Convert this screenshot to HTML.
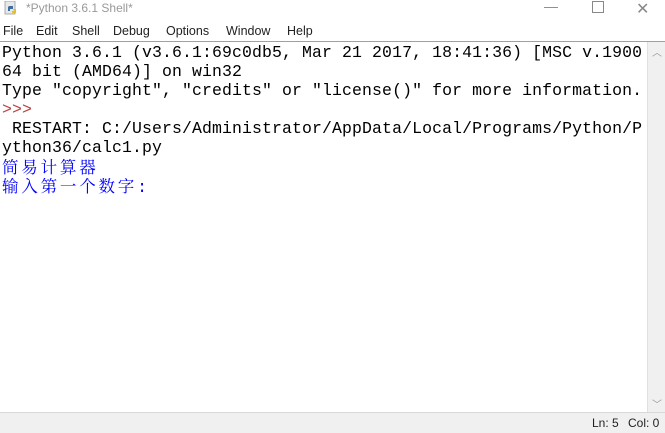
<!DOCTYPE html>
<html><head><meta charset="utf-8"><style>
html,body{margin:0;padding:0;width:665px;height:432px;overflow:hidden;background:#fff;font-family:"Liberation Sans",sans-serif}
.title{position:absolute;left:0;top:0;width:665px;height:22px;background:#fff}
.title .t{position:absolute;left:26px;top:1px;font-size:12px;color:#999}
.icon{position:absolute;left:4px;top:1px;width:14px;height:14px}
.ctl{position:absolute;top:0;color:#888;font-size:14px}
.menu{position:absolute;left:0;top:22px;width:665px;height:19px;font-size:12.5px;color:#222}
.menu span{position:absolute;top:2px}
.line{position:absolute;left:0;top:41px;width:665px;height:1px;background:#a0a0a0}
.text{position:absolute;left:0;top:42px;width:647px;height:370px;background:#fff;overflow:hidden}
.pre{position:absolute;left:2px;top:1px;font-family:"Liberation Mono",monospace;font-size:16.5px;color:#000;letter-spacing:0.1px}
.pre div{height:19px;line-height:19px;white-space:pre}
.p{color:#c04040}.b{color:#00f}
.cjk{font-family:"Noto Serif CJK SC",serif;letter-spacing:2.8px;line-height:19px}
.sb{position:absolute;left:647px;top:42px;width:18px;height:370px;background:#f0f0f0;border-left:1px solid #e0e0e0}
.status{position:absolute;left:0;top:412px;width:665px;height:20px;background:#f0f0f0;border-top:1px solid #d8d8d8;font-size:12px;color:#222}
</style></head><body>
<div class="title">
<svg class="icon" viewBox="0 0 14 14"><rect x="1" y="0" width="10" height="13" fill="#e8e8e8" stroke="#999" stroke-width="0.8"/><path d="M5 5h4v3H6v2H4V6z" fill="#3a6ea5"/><path d="M9 8h3v4H8v-2h2z" fill="#e0c030"/></svg>
<span class="t">*Python 3.6.1 Shell*</span>
<span class="ctl" style="left:544px;top:-2px">—</span>
<span style="position:absolute;left:592px;top:1px;width:10px;height:10px;border:1px solid #888"></span>
<span class="ctl" style="left:636px;top:-1px;font-size:16px">✕</span>
</div>
<div class="menu">
<span style="left:3px">File</span><span style="left:36px">Edit</span><span style="left:72px">Shell</span><span style="left:113px">Debug</span><span style="left:166px">Options</span><span style="left:226px">Window</span><span style="left:287px">Help</span>
</div>
<div class="line"></div>
<div class="text"><div class="pre"><div>Python 3.6.1 (v3.6.1:69c0db5, Mar 21 2017, 18:41:36) [MSC v.1900</div><div>64 bit (AMD64)] on win32</div><div>Type "copyright", "credits" or "license()" for more information.</div><div class="p">&gt;&gt;&gt;</div><div> RESTART: C:/Users/Administrator/AppData/Local/Programs/Python/P</div><div>ython36/calc1.py</div><div class="b"><span class="cjk">简易计算器</span></div><div class="b"><span class="cjk">输入第一个数字</span>:</div></div></div>
<div class="sb"><span style="position:absolute;left:4px;top:2px;color:#999;font-size:10px">︿</span><span style="position:absolute;left:4px;top:354px;color:#999;font-size:10px">﹀</span></div>
<div class="status"><span style="position:absolute;left:592px;top:3px">Ln: 5</span><span style="position:absolute;left:628px;top:3px">Col: 0</span></div>
</body></html>
